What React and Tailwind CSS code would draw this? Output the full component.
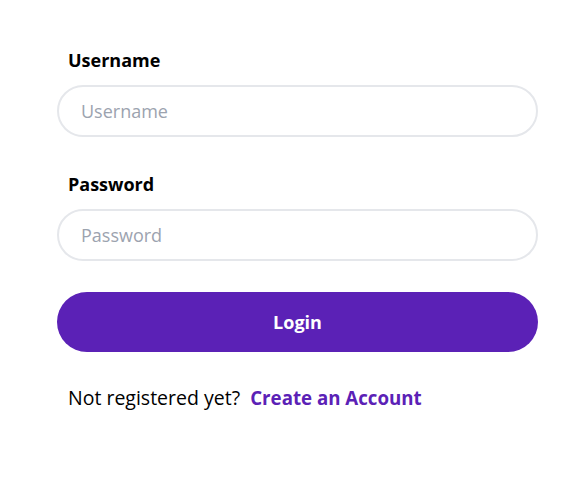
export default function App() {
  return (
    <div className="min-h-screen bg-white" style={{ fontFamily: '"Open Sans", "Noto Sans", sans-serif' }}>
      <div className="pl-[57px] pt-[48px] w-[538px]">
        <label className="block pl-[11px] text-[18px] leading-[24px] font-bold text-black">Username</label>
        <input
          type="text"
          placeholder="Username"
          className="mt-[13px] block w-[481px] h-[52px] rounded-full border-2 border-[#e5e7eb] px-[22px] text-[18px] text-black placeholder:text-[#9ca3af] outline-none"
        />
        <label className="mt-[35px] block pl-[11px] text-[18px] leading-[24px] font-bold text-black">Password</label>
        <input
          type="password"
          placeholder="Password"
          className="mt-[13px] block w-[481px] h-[52px] rounded-full border-2 border-[#e5e7eb] px-[22px] text-[18px] text-black placeholder:text-[#9ca3af] outline-none"
        />
        <button className="mt-[31px] block w-[481px] h-[60px] rounded-full bg-[#5b21b6] text-white text-[18px] font-bold">
          Login
        </button>
        <p className="mt-[34px] pl-[11px] text-[19.5px] leading-[24px] text-black">
          Not registered yet?{"\u00a0 "}
          <a href="#" className="font-bold text-[18.7px] text-[#5b21b6]">Create an Account</a>
        </p>
      </div>
    </div>
  );
}
